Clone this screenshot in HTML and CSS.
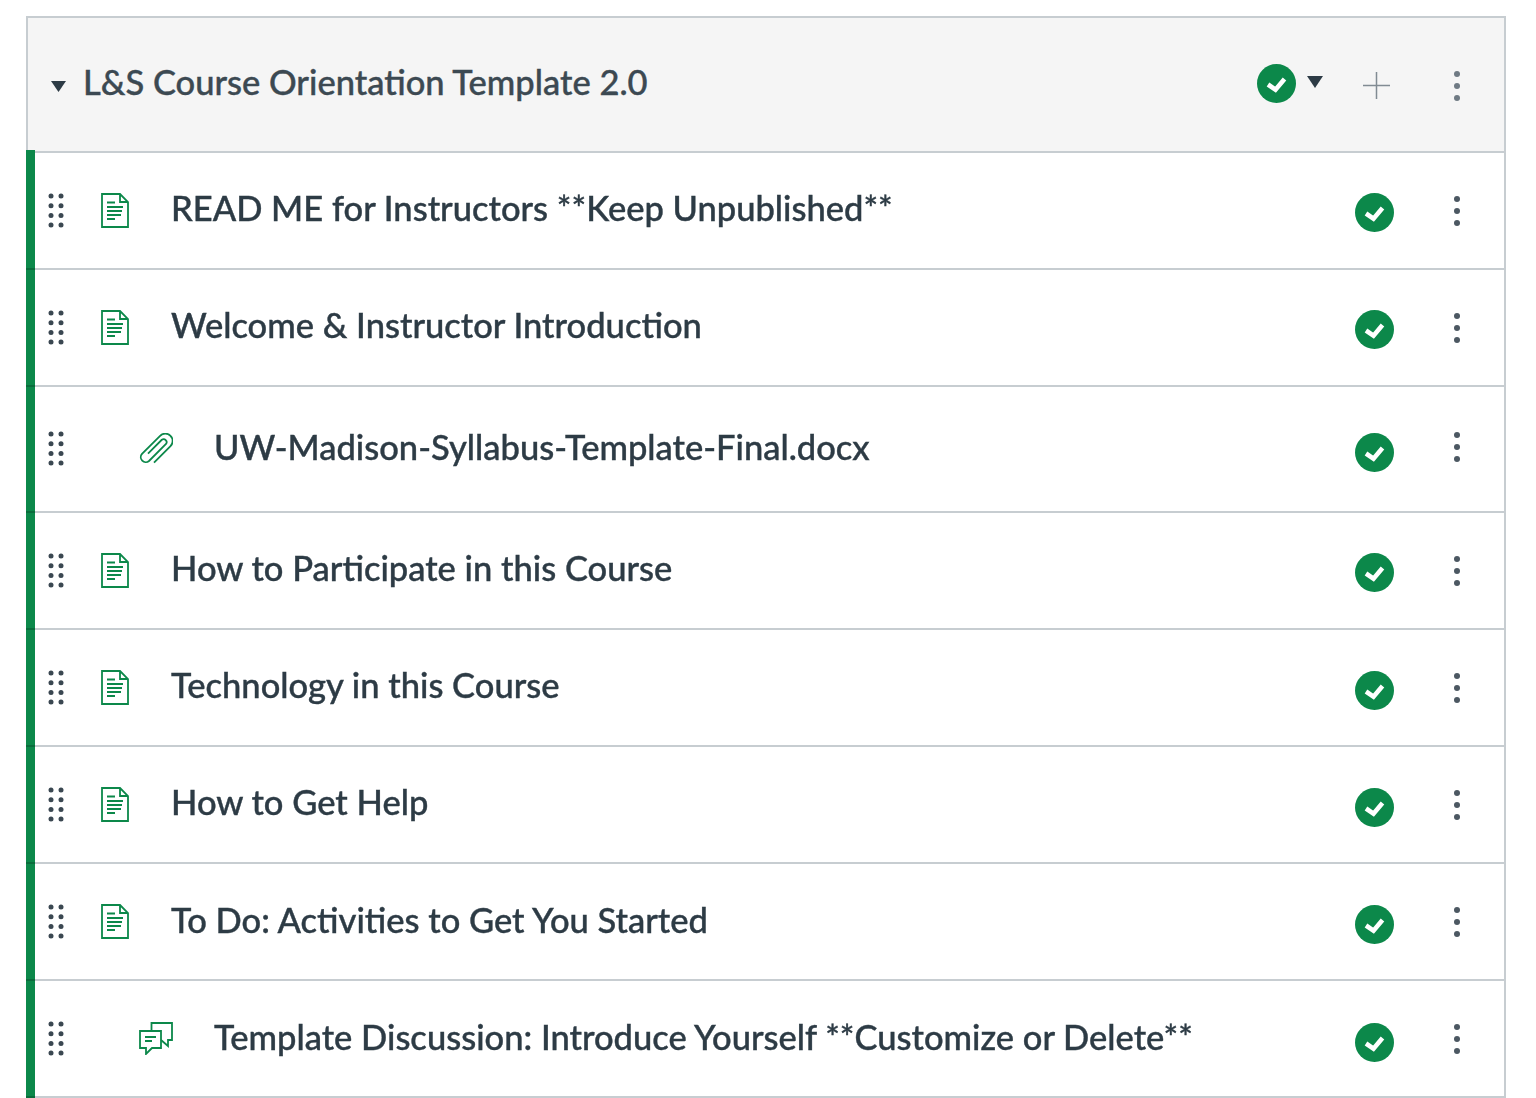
FILE: index.html
```html
<!DOCTYPE html>
<html lang="en">
<head>
    <meta charset="UTF-8">
    <meta name="viewport" content="width=device-width, initial-scale=1.0">
    <title>Course Modules</title>
    <link rel="stylesheet" href="styles.css">
</head>
<body>
    <svg class="defs" aria-hidden="true">
        <symbol id="i-check" viewBox="0 0 39 39">
            <circle cx="19.5" cy="19.5" r="19.5" fill="#0c884a"/>
            <path d="M11 20.500l7.500 5.200 9-10.700" fill="none" stroke="#fff" stroke-width="4.600"/>
        </symbol>
        <symbol id="i-grip" viewBox="0 0 16 35">
            <circle cx="3" cy="3" r="2.5"/><circle cx="13" cy="3" r="2.5"/>
            <circle cx="3" cy="12.8" r="2.5"/><circle cx="13" cy="12.8" r="2.5"/>
            <circle cx="3" cy="22.6" r="2.5"/><circle cx="13" cy="22.6" r="2.5"/>
            <circle cx="3" cy="32" r="2.5"/><circle cx="13" cy="32" r="2.5"/>
        </symbol>
        <symbol id="i-kebab" viewBox="0 0 8 32">
            <circle cx="4" cy="4" r="3"/><circle cx="4" cy="16" r="3"/><circle cx="4" cy="28" r="3"/>
        </symbol>
        <symbol id="i-page" viewBox="0 0 28 35">
            <path d="M1 1H19L27 9V34H1Z M19 1V9H27" fill="none" stroke="#0c884a" stroke-width="1.8"/>
            <path d="M6 9.500H14 M6 14H22 M6 18H21 M6 22H20 M6 26H14" fill="none" stroke="#0c884a" stroke-width="1.8"/>
        </symbol>
        <symbol id="i-clip" viewBox="0 0 34 33">
            <path d="M15 29.700L31.500 13.200A7.350 7.350 0 0 0 21.100 2.800L3 20.900A5 5 0 0 0 10 28L27 11A3 3 0 0 0 22.800 6.800L9 20.600" fill="none" stroke="#0c884a" stroke-width="1.8"/>
        </symbol>
        <symbol id="i-discuss" viewBox="0 0 34 33">
            <path d="M12.500 8V1H33V18H29V24L22 18" fill="none" stroke="#0c884a" stroke-width="1.8"/>
            <path d="M1 9H22V26H13L7 32V26H1Z" fill="none" stroke="#0c884a" stroke-width="1.8"/>
            <path d="M6 15H17 M6 19H13" fill="none" stroke="#0c884a" stroke-width="1.8"/>
        </symbol>
    </svg>

    <div class="module">
        <div class="module-header">
            <svg class="caret-small" viewBox="0 0 15 11"><path d="M0 0H15L7.500 11Z"/></svg>
            <h2 class="module-title">L&amp;S Course Orientation Template 2.0</h2>
            <svg class="status"><use href="#i-check"/></svg>
            <svg class="caret-status" viewBox="0 0 16 12"><path d="M0 0H16L8 12Z"/></svg>
            <svg class="plus" viewBox="0 0 27 27"><path d="M0 13.500H27 M13.500 0V27" fill="none" stroke="#818b93" stroke-width="1.500"/></svg>
            <svg class="kebab kebab-light"><use href="#i-kebab"/></svg>
        </div>

        <ul class="items">
            <li class="item">
                <svg class="grip"><use href="#i-grip"/></svg>
                <svg class="type-icon"><use href="#i-page"/></svg>
                <span class="item-title">READ ME for Instructors **Keep Unpublished**</span>
                <svg class="status"><use href="#i-check"/></svg>
                <svg class="kebab"><use href="#i-kebab"/></svg>
            </li>
            <li class="item">
                <svg class="grip"><use href="#i-grip"/></svg>
                <svg class="type-icon"><use href="#i-page"/></svg>
                <span class="item-title">Welcome &amp; Instructor Introduction</span>
                <svg class="status"><use href="#i-check"/></svg>
                <svg class="kebab"><use href="#i-kebab"/></svg>
            </li>
            <li class="item item-tall">
                <svg class="grip"><use href="#i-grip"/></svg>
                <svg class="type-icon type-icon-wide"><use href="#i-clip"/></svg>
                <span class="item-title">UW-Madison-Syllabus-Template-Final.docx</span>
                <svg class="status"><use href="#i-check"/></svg>
                <svg class="kebab"><use href="#i-kebab"/></svg>
            </li>
            <li class="item">
                <svg class="grip"><use href="#i-grip"/></svg>
                <svg class="type-icon"><use href="#i-page"/></svg>
                <span class="item-title">How to Participate in this Course</span>
                <svg class="status"><use href="#i-check"/></svg>
                <svg class="kebab"><use href="#i-kebab"/></svg>
            </li>
            <li class="item item-low">
                <svg class="grip"><use href="#i-grip"/></svg>
                <svg class="type-icon"><use href="#i-page"/></svg>
                <span class="item-title">Technology in this Course</span>
                <svg class="status"><use href="#i-check"/></svg>
                <svg class="kebab"><use href="#i-kebab"/></svg>
            </li>
            <li class="item item-low">
                <svg class="grip"><use href="#i-grip"/></svg>
                <svg class="type-icon"><use href="#i-page"/></svg>
                <span class="item-title">How to Get Help</span>
                <svg class="status"><use href="#i-check"/></svg>
                <svg class="kebab"><use href="#i-kebab"/></svg>
            </li>
            <li class="item item-low">
                <svg class="grip"><use href="#i-grip"/></svg>
                <svg class="type-icon"><use href="#i-page"/></svg>
                <span class="item-title item-title-low">To Do: Activities to Get You Started</span>
                <svg class="status"><use href="#i-check"/></svg>
                <svg class="kebab"><use href="#i-kebab"/></svg>
            </li>
            <li class="item item-last">
                <svg class="grip"><use href="#i-grip"/></svg>
                <svg class="type-icon type-icon-wide"><use href="#i-discuss"/></svg>
                <span class="item-title item-title-low">Template Discussion: Introduce Yourself **Customize or Delete**</span>
                <svg class="status"><use href="#i-check"/></svg>
                <svg class="kebab"><use href="#i-kebab"/></svg>
            </li>
        </ul>
    </div>
</body>
</html>
```

FILE: styles.css
```css
body {
    margin: 0;
    background: #fff;
    font-family: 'Lato', 'Liberation Sans', sans-serif;
    color: #2d3b45;
}
.defs {
    display: none;
}
.module {
    width: 1480px;
    margin: 16px 0 0 26px;
    filter: blur(0.4px);
}
.module-header {
    display: flex;
    align-items: center;
    height: 133px;
    background: #f5f5f5;
    border: 2px solid #c7cdd1;
}
.caret-small {
    width: 15px;
    height: 11px;
    margin: 4px 0 0 23px;
    fill: #2d3b45;
}
.module-title {
    flex: 1;
    margin: -7px 0 0 17px;
    font-size: 34.5px;
    font-weight: 500;
    color: #3c4952;
    -webkit-text-stroke: 0.4px #3c4952;
}
.status {
    flex: none;
    width: 39px;
    height: 39px;
    margin-top: 4px;
}
.module-header .status {
    margin-top: -3px;
}
.caret-status {
    width: 16px;
    height: 12px;
    margin: -5px 0 0 11px;
    fill: #2d3b45;
}
.plus {
    width: 27px;
    height: 27px;
    margin: 2px 0 0 40px;
}
.kebab {
    flex: none;
    width: 8px;
    height: 32px;
    margin: 0 43px 0 59px;
    fill: #4c5862;
}
.kebab-light {
    margin: 2px 43px 0 63px;
    fill: #6f7a83;
}
.items {
    list-style: none;
    margin: -3px 0 0;
    padding: 0;
    border-left: 9px solid #0c884a;
    border-right: 2px solid #c7cdd1;
}
.item {
    position: relative;
    display: flex;
    align-items: center;
    height: 115px;
    border-bottom: 2px solid #c7cdd1;
    padding-left: 13px;
}
.item::before {
    content: '';
    position: absolute;
    left: -9px;
    bottom: -2px;
    width: 9px;
    height: 2px;
    background: rgba(0, 0, 0, 0.2);
}
.item:first-child {
    padding-top: 3px;
}
.item-tall {
    height: 124px;
}
.item-tall .status {
    margin-top: 6px;
}
.item-tall .kebab {
    margin-top: -4px;
}
.item-low .status {
    margin-top: 6px;
}
.item-last .status {
    margin-top: 8px;
}
.grip {
    flex: none;
    width: 16px;
    height: 35px;
    margin-top: -1px;
    fill: #3a4751;
}
.type-icon {
    flex: none;
    width: 28px;
    height: 35px;
    margin: 0 42px 0 37px;
}
.type-icon-wide {
    width: 34px;
    height: 33px;
    margin: 0 41px 0 75px;
}
.item-title {
    flex: 1;
    margin-top: -6px;
    font-size: 34.5px;
    font-weight: 500;
    color: #2d3b45;
    -webkit-text-stroke: 0.4px #2d3b45;
}
.item-title-low {
    margin-top: -4px;
}
```
